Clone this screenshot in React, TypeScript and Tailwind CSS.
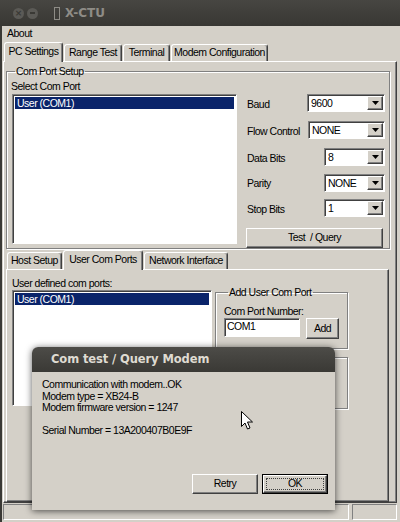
import React from 'react';

const raised =
  'border border-t-white border-l-white border-r-[#404040] border-b-[#404040] shadow-[inset_-1px_-1px_0_#808080] bg-[#d4d0c8]';
const sunken =
  'border border-t-[#808080] border-l-[#808080] border-r-white border-b-white shadow-[inset_1px_1px_0_#404040] bg-white';
const etched = 'border border-[#808080] shadow-[inset_1px_1px_0_#fff,1px_1px_0_#fff]';

const Tab: React.FC<{ label: string; w: string; active?: boolean }> = ({ label, w, active }) => (
  <div
    className={
      active
        ? `${w} relative z-10 h-[20px] -mb-px bg-[#d4d0c8] border-t border-l border-r border-t-white border-l-white border-r-[#404040] rounded-t-[3px] shadow-[inset_-1px_0_0_#808080] flex items-center justify-center pb-[2px]`
        : `${w} h-[17px] border-t border-l border-r border-t-white border-l-white border-r-[#404040] rounded-t-[3px] shadow-[inset_-1px_0_0_#808080] flex items-center justify-center`
    }
  >
    {label}
  </div>
);

const Arrow = () => (
  <div className={`${raised} w-[16px] h-full flex items-center justify-center`}>
    <svg width="7" height="4" viewBox="0 0 7 4">
      <path d="M0 0h7L3.5 4z" fill="#000" />
    </svg>
  </div>
);

const Select: React.FC<{ value: string; w: string }> = ({ value, w }) => (
  <div className={`${sunken} ${w} h-[18px] flex items-stretch p-[1px] pl-[2px]`}>
    <div className="flex-1 leading-[14px] pl-[1px]">{value}</div>
    <Arrow />
  </div>
);

const Field: React.FC<{ label: string; value: string; w: string; mt: string }> = ({ label, value, w, mt }) => (
  <div className={`flex items-center justify-between ${mt}`}>
    <span className="pl-[1px] pt-[3px]">{label}</span>
    <Select value={value} w={w} />
  </div>
);

const Cursor = () => (
  <svg width="12" height="19" viewBox="0 0 12 19">
    <path d="M0.5 0.5v15l3.5-3.5 2.5 6 2.5-1-2.5-6h5z" fill="#fff" stroke="#000" strokeWidth="1" strokeLinejoin="round" />
  </svg>
);

export default function App() {
  return (
    <div className="w-[400px] h-[522px] bg-[#d4d0c8] relative overflow-hidden flex flex-col whitespace-nowrap text-[10.5px] tracking-[-0.5px] text-black font-['Liberation_Sans',Arial,sans-serif]">
      {/* title bar */}
      <div className="h-[26px] shrink-0 bg-gradient-to-b from-[#474642] to-[#383733] flex items-center pl-[13px] tracking-normal">
        <div className="w-[11px] h-[11px] rounded-full bg-[#5b5a56] flex items-center justify-center text-[#3a3935] text-[9px] leading-none font-bold font-['DejaVu_Sans',sans-serif]">×</div>
        <div className="w-[11px] h-[11px] rounded-full bg-[#5b5a56] ml-[3px] flex items-center justify-center">
          <div className="w-[5px] h-[2px] bg-[#3a3935]" />
        </div>
        <div className="ml-[16px] w-[6px] h-[13px] border-[1.5px] border-[#8e8c86]" />
        <span className="ml-[5px] text-[12px] font-bold text-[#8e8c86] font-['DejaVu_Sans',sans-serif]">X-CTU</span>
      </div>

      <div className="flex-1 flex flex-col border-l-2 border-[#3a3935]">
        {/* menu */}
        <div className="h-[16px] pl-[5px] flex items-center">About</div>

        {/* top tabs */}
        <div className="flex items-end h-[19px] pl-[2px] gap-[1px]">
          <Tab label="PC Settings" w="w-[59px]" active />
          <Tab label="Range Test" w="w-[58px]" />
          <Tab label="Terminal" w="w-[47px]" />
          <Tab label="Modem Configuration" w="w-[97px]" />
        </div>

        {/* main panel */}
        <div className="ml-[1px] w-[394px] h-[442px] border border-t-white border-l-white border-r-[#404040] border-b-[#404040] shadow-[inset_-1px_-1px_0_#808080] pt-[3px] pl-[2px] pr-[7px]">
          <fieldset className={`${etched} h-[184px] px-[4px]`}>
            <legend className="ml-[4px] px-[1px] leading-[13px]">Com Port Setup</legend>
            <div className="flex gap-[9px]">
              <div className="w-[226px] pl-[1px]">
                <div className="mt-[2px] h-[14px] leading-[13px] -ml-[1px]">Select Com Port</div>
                <div className={`${sunken} h-[150px] p-[2px]`}>
                  <div className="h-[12px] leading-[12px] bg-[#0a246a] text-white pl-[2px]">User (COM1)</div>
                </div>
              </div>
              <div className="w-[139px] flex flex-col pt-[16px]">
                <Field label="Baud" value="9600" w="w-[78px]" mt="mt-0" />
                <Field label="Flow Control" value="NONE" w="w-[77px]" mt="mt-[8px]" />
                <Field label="Data Bits" value="8" w="w-[61px]" mt="mt-[8px]" />
                <Field label="Parity" value="NONE" w="w-[61px]" mt="mt-[7px]" />
                <Field label="Stop Bits" value="1" w="w-[61px]" mt="mt-[7px]" />
                <div className={`${raised} mt-[10px] h-[20px] w-[137px] flex items-center justify-center`}>
                  {'Test\u00a0 / Query'}
                </div>
              </div>
            </div>
          </fieldset>

          {/* inner tabs */}
          <div className="flex items-end h-[19px] pl-[1px] gap-[1px] mt-[1px]">
            <Tab label="Host Setup" w="w-[55px]" />
            <Tab label="User Com Ports" w="w-[80px]" active />
            <Tab label="Network Interface" w="w-[84px]" />
          </div>
          <div className="h-[233px] border border-t-white border-l-white border-r-[#404040] border-b-[#404040] shadow-[inset_-1px_-1px_0_#808080] flex pl-[5px] gap-[3px]">
            <div className="w-[200px]">
              <div className="mt-[7px] h-[13px] leading-[13px]">User defined com ports:</div>
              <div className={`${sunken} h-[116px] p-[2px]`}>
                <div className="h-[12px] leading-[12px] bg-[#0a246a] text-white pl-[2px]">User (COM1)</div>
              </div>
            </div>
            <div className="w-[133px] pt-[16px]">
              <fieldset className={`${etched} h-[63px] pl-[8px]`}>
                <legend className="ml-[4px] px-[1px] leading-[13px]">Add User Com Port</legend>
                <div className="mt-[6px] leading-[12px]">Com Port Number:</div>
                <div className="flex items-start gap-[6px] mt-[1px]">
                  <div className={`${sunken} w-[76px] h-[19px] pl-[2px] leading-[15px]`}>COM1</div>
                  <div className={`${raised} w-[33px] h-[21px] flex items-center justify-center`}>Add</div>
                </div>
              </fieldset>
              <div className={`${etched} h-[52px] mt-[8px]`} />
            </div>
          </div>
        </div>

        {/* status bar */}
        <div className="h-[18px] flex gap-[3px] pl-[1px] pt-[1px]">
          <div className="w-[346px] h-[16px] border border-t-[#808080] border-l-[#808080] border-r-white border-b-white" />
          <div className="w-[45px] h-[16px] border border-t-[#808080] border-l-[#808080] border-r-white border-b-white" />
        </div>
      </div>

      {/* modal dialog */}
      <div className="absolute left-[32px] top-[347px] w-[303px] h-[163px] flex flex-col rounded-t-[6px] shadow-[0_1px_7px_rgba(0,0,0,0.65)]">
        <div className="h-[25px] rounded-t-[6px] bg-gradient-to-b from-[#4d4c48] to-[#3a3935] flex items-center pl-[19px] text-[11.5px] tracking-[-0.1px] font-bold text-[#dfdbd2] font-['DejaVu_Sans',sans-serif]">
          Com test / Query Modem
        </div>
        <div className="flex-1 bg-[#d4d0c8] flex flex-col pl-[10px] pt-[7px] pr-[7px] pb-[16px]">
          <div className="leading-[11.5px]">
            <div>Communication with modem..OK</div>
            <div>Modem type = XB24-B</div>
            <div>Modem firmware version = 1247</div>
            <div className="h-[11.5px]" />
            <div>Serial Number = 13A200407B0E9F</div>
          </div>
          <div className="flex-1" />
          <div className="flex justify-end gap-[4px]">
            <div className={`${raised} w-[66px] h-[20px] flex items-center justify-center`}>Retry</div>
            <div className="w-[66px] h-[20px] border border-black flex">
              <div className={`${raised} flex-1 flex p-[2px]`}>
                <div className="flex-1 border border-dotted border-[#404040] flex items-center justify-center">OK</div>
              </div>
            </div>
          </div>
        </div>
      </div>

      <div className="absolute left-[241px] top-[411px]">
        <Cursor />
      </div>
    </div>
  );
}
